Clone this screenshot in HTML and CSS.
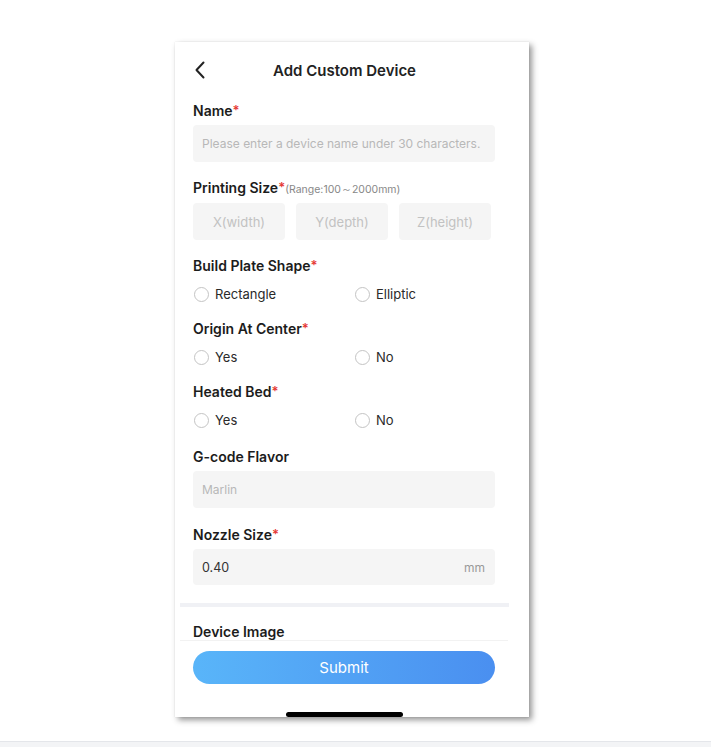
FILE: index.html
```html
<!DOCTYPE html>
<html lang="en">
<head>
<meta charset="utf-8">
<title>Add Custom Device</title>
<link rel="stylesheet" href="styles.css">
</head>
<body>
<div class="page">
  <div class="phone">
    <div class="scroll">
      <header class="header">
        <svg class="back" width="12" height="18" viewBox="0 0 12 18"><path d="M9.5 1.5 L2.5 9 L9.5 16.5" fill="none" stroke="#222" stroke-width="2" stroke-linecap="round" stroke-linejoin="round"/></svg>
        <h1 class="title">Add Custom Device</h1>
      </header>
      <div class="form">
        <div class="label">Name<span class="req">*</span></div>
        <div class="input"><span class="ph">Please enter a device name under 30 characters.</span></div>

        <div class="label gap">Printing Size<span class="req">*</span><span class="hint">(Range:100～2000mm)</span></div>
        <div class="sizes">
          <div class="size">X(width)</div>
          <div class="size">Y(depth)</div>
          <div class="size">Z(height)</div>
        </div>

        <div class="label gap radio-label">Build Plate Shape<span class="req">*</span></div>
        <div class="radios">
          <div class="radio"><span class="dot"></span>Rectangle</div>
          <div class="radio"><span class="dot"></span>Elliptic</div>
        </div>

        <div class="label gap2">Origin At Center<span class="req">*</span></div>
        <div class="radios">
          <div class="radio"><span class="dot"></span>Yes</div>
          <div class="radio"><span class="dot"></span>No</div>
        </div>

        <div class="label gap2">Heated Bed<span class="req">*</span></div>
        <div class="radios">
          <div class="radio"><span class="dot"></span>Yes</div>
          <div class="radio"><span class="dot"></span>No</div>
        </div>

        <div class="label gap3">G-code Flavor</div>
        <div class="input"><span class="ph">Marlin</span></div>

        <div class="label gap nozzle-label">Nozzle Size<span class="req">*</span></div>
        <div class="input nozzle"><span class="val">0.40</span><span class="unit">mm</span></div>
      </div>
      <div class="divider"></div>
      <div class="form">
        <div class="label last">Device Image</div>
      </div>
    </div>
    <footer class="footer">
      <button class="submit">Submit</button>
      <div class="home"></div>
    </footer>
  </div>
</div>
<div class="strip"></div>
</body>
</html>
```
FILE: styles.css
```css
* { box-sizing: border-box; margin: 0; padding: 0; }
html, body { background: #fff; }
body {
  font-family: Inter, "Noto Sans", "Liberation Sans", sans-serif;
  color: #222;
  height: 747px;
  overflow: hidden;
  display: flex;
  flex-direction: column;
}
.page {
  height: 741px;
  padding: 42px 0 0 175px;
}
.phone {
  width: 354px;
  height: 675px;
  background: #fff;
  box-shadow: 3px 3px 6px rgba(0,0,0,0.42), 0 0 1px rgba(0,0,0,0.12);
  display: flex;
  flex-direction: column;
}
.scroll {
  height: 598px;
  overflow: hidden;
}
.header {
  height: 56px;
  display: flex;
  align-items: center;
  justify-content: center;
  position: relative;
}
.back {
  position: absolute;
  left: 19px;
  top: 19px;
}
.title {
  font-size: 15px;
  font-weight: 600;
  color: #222;
  margin-left: -15px;
}
.form {
  padding: 3px 34px 0 18px;
}
.label {
  font-size: 14px;
  font-weight: 600;
  line-height: 20px;
  height: 20px;
  color: #1c1c1c;
  margin-bottom: 4px;
  white-space: nowrap;
}
.label.gap { margin-top: 16px; }
.label.radio-label { margin-bottom: 8px; }
.label.nozzle-label { margin-top: 17px; }
.label.gap2 { margin-top: 15px; margin-bottom: 8px; }
.label.gap3 { margin-top: 17px; }
.label.last { line-height: 16px; height: 16px; }
.req { color: #e53935; font-size: 13px; line-height: 1; position: relative; top: -1px; }
.hint { font-size: 10.5px; font-weight: 400; color: #888; line-height: 1; }
.input {
  height: 37px;
  background: #f5f5f5;
  border-radius: 4px;
  display: flex;
  align-items: center;
  padding: 0 10px 0 9px;
  font-size: 12px;
}
.ph { color: #b8b8b8; }
.nozzle { justify-content: space-between; height: 36px; }
.val { color: #333; font-size: 12.5px; }
.unit { color: #999; font-size: 12px; }
.sizes {
  display: flex;
  gap: 11px;
  margin-top: 5px;
}
.size {
  width: 92px;
  height: 37px;
  background: #f5f5f5;
  border-radius: 4px;
  display: flex;
  align-items: center;
  justify-content: center;
  font-size: 13px;
  color: #c2c2c2;
}
.radios {
  display: grid;
  grid-template-columns: 161px 1fr;
  height: 20px;
}
.radio {
  display: flex;
  align-items: center;
  font-size: 13px;
  color: #2a2a2a;
  gap: 6px;
}
.dot {
  width: 15px;
  height: 15px;
  border: 1px solid #c4c4c4;
  border-radius: 50%;
  margin-left: 1px;
}
.divider {
  height: 4px;
  background: #f0f1f5;
  margin: 18px 20px 0 5px;
}
.divider + .form { padding-top: 17px; }
.footer {
  flex: 1;
  border-top: 1px solid #f2f2f2;
  margin: 0 21px 0 5px;
  padding: 10px 13px 0 13px;
  display: flex;
  flex-direction: column;
  align-items: center;
}
.submit {
  width: 302px;
  height: 33px;
  border: none;
  border-radius: 17px;
  background: linear-gradient(90deg, #59b5f9 0%, #4a8ff0 100%);
  color: #fff;
  font-family: Inter, "Noto Sans", sans-serif;
  font-size: 15px;
  font-weight: 400;
  align-self: flex-start;
}
.home {
  width: 117px;
  height: 5px;
  background: #000;
  border-radius: 3px;
  margin-top: auto;
}
.strip {
  height: 6px;
  background: #f3f4f6;
  border-top: 1px solid #e4e6ea;
}
```
